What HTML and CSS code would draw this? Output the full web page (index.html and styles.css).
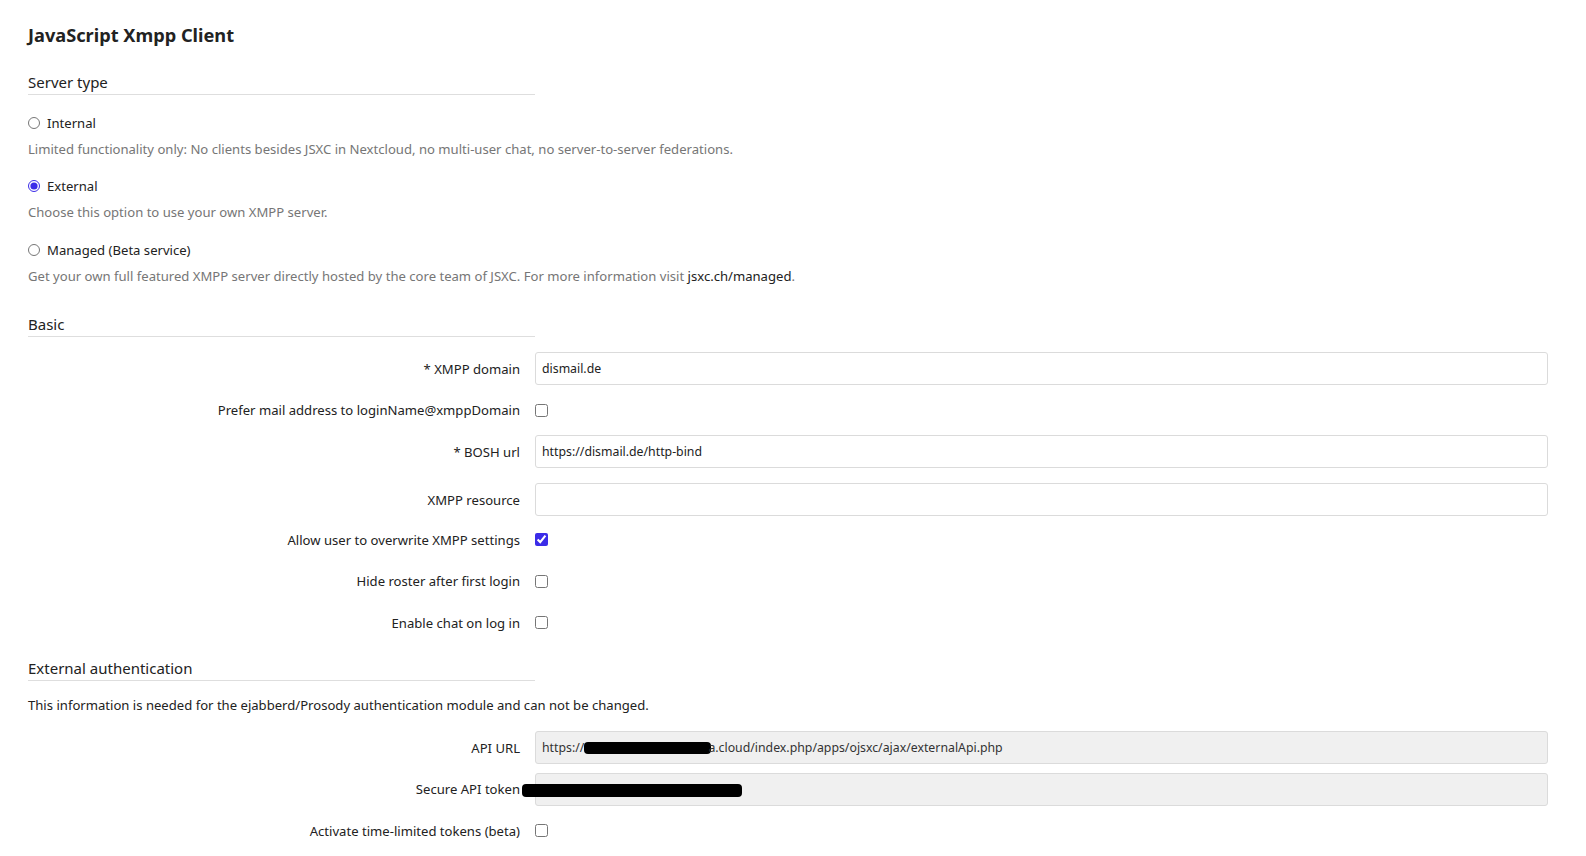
FILE: index.html
```html
<!DOCTYPE html>
<html lang="en">
<head>
<meta charset="utf-8">
<title>JavaScript Xmpp Client</title>
<link rel="stylesheet" href="styles.css">
</head>
<body>
<div class="page">
  <h2 class="title">JavaScript Xmpp Client</h2>

  <h3 class="section">Server type</h3>
  <div class="option">
    <label class="radio"><input type="radio" name="type"> Internal</label>
    <p class="hint">Limited functionality only: No clients besides JSXC in Nextcloud, no multi-user chat, no server-to-server federations.</p>
  </div>
  <div class="option">
    <label class="radio"><input type="radio" name="type" checked> External</label>
    <p class="hint">Choose this option to use your own XMPP server.</p>
  </div>
  <div class="option">
    <label class="radio"><input type="radio" name="type"> Managed (Beta service)</label>
    <p class="hint">Get your own full featured XMPP server directly hosted by the core team of JSXC. For more information visit <a href="#" class="link">jsxc.ch/managed</a>.</p>
  </div>

  <h3 class="section section-basic">Basic</h3>
  <div class="form">
    <div class="row">
      <label class="lbl">* XMPP domain</label>
      <input class="field" type="text" value="dismail.de">
    </div>
    <div class="row">
      <label class="lbl">Prefer mail address to loginName@xmppDomain</label>
      <div class="check"><input type="checkbox"></div>
    </div>
    <div class="row">
      <label class="lbl">* BOSH url</label>
      <input class="field" type="text" value="https://dismail.de/http-bind">
    </div>
    <div class="row row-spaced">
      <label class="lbl">XMPP resource</label>
      <input class="field" type="text" value="">
    </div>
    <div class="row row-after">
      <label class="lbl">Allow user to overwrite XMPP settings</label>
      <div class="check"><input type="checkbox" checked></div>
    </div>
    <div class="row">
      <label class="lbl">Hide roster after first login</label>
      <div class="check"><input type="checkbox"></div>
    </div>
    <div class="row">
      <label class="lbl">Enable chat on log in</label>
      <div class="check"><input type="checkbox"></div>
    </div>
  </div>

  <h3 class="section section-ext">External authentication</h3>
  <p class="info">This information is needed for the ejabberd/Prosody authentication module and can not be changed.</p>
  <div class="form form-ext">
    <div class="row">
      <label class="lbl">API URL</label>
      <div class="field field-disabled">https://<span class="redact-inline"></span>a.cloud/index.php/apps/ojsxc/ajax/externalApi.php</div>
    </div>
    <div class="row">
      <label class="lbl">Secure API token</label>
      <div class="field field-disabled field-wrap"><span class="redact redact-token"></span></div>
    </div>
    <div class="row">
      <label class="lbl">Activate time-limited tokens (beta)</label>
      <div class="check"><input type="checkbox"></div>
    </div>
  </div>
</div>
</body>
</html>
```

FILE: styles.css
```css
* { box-sizing: border-box; }

html, body {
  margin: 0;
  padding: 0;
  background: #ffffff;
}

body {
  font-family: "Noto Sans", "Open Sans", "Liberation Sans", sans-serif;
  font-size: 13.1px;
  color: #222222;
}

.page {
  padding: 20px 38px 0 28px;
}

.title {
  margin: 0;
  font-size: 18.2px;
  font-weight: 700;
  line-height: 30px;
  color: #222222;
}

.section {
  width: 507px;
  margin: 21.5px 0 0 0;
  padding: 0 0 2px 0;
  font-size: 15px;
  font-weight: 400;
  line-height: 20px;
  border-bottom: 1px solid #dedede;
}

.section-basic { margin-top: 28.5px; }
.section-ext { margin-top: 19px; }

.option {
  margin-top: 18px;
}

.option + .option { margin-top: 17.5px; }

.radio {
  display: flex;
  align-items: center;
  gap: 7px;
  line-height: 20px;
  height: 20px;
}

.radio input {
  margin: 0;
  width: 12px;
  height: 12px;
  accent-color: #3b2ce8;
}

.hint {
  margin: 6px 0 0 0;
  line-height: 20px;
  color: #767676;
}

.link {
  color: #222222;
  text-decoration: none;
}

.form {
  margin-top: 15px;
  display: flex;
  flex-direction: column;
  gap: 8.5px;
}

.row {
  display: grid;
  grid-template-columns: 492px 1fr;
  column-gap: 15px;
  align-items: center;
  height: 33px;
}

.row-spaced { margin-top: 6.5px; }
.row-after { margin-top: -1.5px; }

.lbl {
  text-align: right;
  line-height: 20px;
  white-space: nowrap;
}

.field {
  width: 100%;
  height: 33px;
  margin: 0;
  padding: 0 6px;
  border: 1px solid #dbdbdb;
  border-radius: 3px;
  font-family: inherit;
  font-size: 12.3px;
  color: #222222;
  background: #ffffff;
  outline: none;
}

.field-disabled {
  display: flex;
  align-items: center;
  background: #f0f0f0;
  color: #333333;
  white-space: nowrap;
  overflow: hidden;
}

.field-wrap {
  position: relative;
  overflow: visible;
}

.redact-inline {
  display: inline-block;
  width: 127px;
  height: 12px;
  background: #000000;
  border-radius: 4px;
  margin-right: -3px;
}

.check {
  display: flex;
  align-items: center;
}

.check input {
  margin: 0;
  width: 13px;
  height: 13px;
  accent-color: #3b2ce8;
}

.info {
  margin: 14px 0 0 0;
  line-height: 20px;
  color: #222222;
}

.form-ext { margin-top: 16px; }

.redact {
  position: absolute;
  background: #000000;
  border-radius: 4px;
}

.redact-token {
  left: -14px;
  top: 10px;
  width: 220px;
  height: 13px;
}
```
